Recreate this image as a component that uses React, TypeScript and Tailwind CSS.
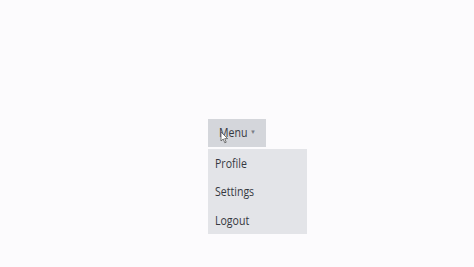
import React from "react";

export default function App() {
  return (
    <div
      className="w-[474px] h-[267px] bg-[#fcfbfd] pt-[119px] pl-[208px]"
      style={{ fontFamily: '"Open Sans", "Noto Sans", sans-serif' }}
    >
      <div className="relative flex flex-col items-start">
        <button className="relative flex items-center h-[28px] w-[58px] pl-[11px] bg-[#d4d6db] text-[#35383f] text-[12px] leading-none">
          <span className="inline-block w-[28px] scale-x-[0.88] origin-left whitespace-nowrap">Menu</span>
          <span className="ml-[3px] text-[6px] text-[#7a7e87] mt-[-2px]">▼</span>
          <svg
            className="absolute left-[12px] top-[12px]"
            width="9"
            height="13"
            viewBox="0 0 9 13"
          >
            <path
              d="M1 1 L1 10 L3.2 8 L4.8 11.8 L6.2 11.2 L4.7 7.6 L7.6 7.6 Z"
              fill="#ffffff"
              stroke="#555"
              strokeWidth="0.8"
            />
          </svg>
        </button>
        <div className="mt-[2px] w-[99px] h-[85px] bg-[#e3e4e8] flex flex-col text-[12px] text-[#35383f]">
          <div className="flex-1 flex items-center pl-[7px] pt-[2px]">
            <span className="inline-block scale-x-[0.88] origin-left whitespace-nowrap">Profile</span>
          </div>
          <div className="flex-1 flex items-center pl-[7px] pt-[2px]">
            <span className="inline-block scale-x-[0.88] origin-left whitespace-nowrap">Settings</span>
          </div>
          <div className="flex-1 flex items-center pl-[7px] pt-[2px]">
            <span className="inline-block scale-x-[0.88] origin-left whitespace-nowrap">Logout</span>
          </div>
        </div>
      </div>
    </div>
  );
}
